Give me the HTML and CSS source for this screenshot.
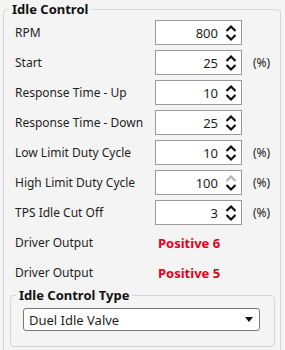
FILE: index.html
```html
<!DOCTYPE html>
<html lang="en">
<head>
    <meta charset="UTF-8">
    <title>Idle Control</title>
    <link rel="stylesheet" href="styles.css">
</head>
<body>
    <fieldset class="group">
        <legend>Idle Control</legend>

        <div class="rows">
            <div class="row">
                <span class="label">RPM</span>
                <div class="spin"><span class="value">800</span><svg class="arrows" width="12" height="18" viewBox="0 0 12 18"><path class="up" d="M1.5 7 L6 2.5 L10.5 7"/><path d="M1.5 11 L6 15.5 L10.5 11"/></svg></div>
            </div>
            <div class="row">
                <span class="label">Start</span>
                <div class="spin"><span class="value">25</span><svg class="arrows" width="12" height="18" viewBox="0 0 12 18"><path class="up" d="M1.5 7 L6 2.5 L10.5 7"/><path d="M1.5 11 L6 15.5 L10.5 11"/></svg></div>
                <span class="unit">(%)</span>
            </div>
            <div class="row">
                <span class="label">Response Time - Up</span>
                <div class="spin"><span class="value">10</span><svg class="arrows" width="12" height="18" viewBox="0 0 12 18"><path class="up" d="M1.5 7 L6 2.5 L10.5 7"/><path d="M1.5 11 L6 15.5 L10.5 11"/></svg></div>
            </div>
            <div class="row">
                <span class="label">Response Time - Down</span>
                <div class="spin"><span class="value">25</span><svg class="arrows" width="12" height="18" viewBox="0 0 12 18"><path class="up" d="M1.5 7 L6 2.5 L10.5 7"/><path d="M1.5 11 L6 15.5 L10.5 11"/></svg></div>
            </div>
            <div class="row">
                <span class="label">Low Limit Duty Cycle</span>
                <div class="spin"><span class="value">10</span><svg class="arrows" width="12" height="18" viewBox="0 0 12 18"><path class="up" d="M1.5 7 L6 2.5 L10.5 7"/><path d="M1.5 11 L6 15.5 L10.5 11"/></svg></div>
                <span class="unit">(%)</span>
            </div>
            <div class="row">
                <span class="label">High Limit Duty Cycle</span>
                <div class="spin"><span class="value">100</span><svg class="arrows max" width="12" height="18" viewBox="0 0 12 18"><path class="up" d="M1.5 7 L6 2.5 L10.5 7"/><path d="M1.5 11 L6 15.5 L10.5 11"/></svg></div>
                <span class="unit">(%)</span>
            </div>
            <div class="row">
                <span class="label">TPS Idle Cut Off</span>
                <div class="spin"><span class="value">3</span><svg class="arrows" width="12" height="18" viewBox="0 0 12 18"><path class="up" d="M1.5 7 L6 2.5 L10.5 7"/><path d="M1.5 11 L6 15.5 L10.5 11"/></svg></div>
                <span class="unit">(%)</span>
            </div>
            <div class="row">
                <span class="label">Driver Output</span>
                <span class="output">Positive 6</span>
            </div>
            <div class="row">
                <span class="label">Driver Output</span>
                <span class="output">Positive 5</span>
            </div>
        </div>

        <fieldset class="group inner">
            <legend>Idle Control Type</legend>
            <div class="combo">
                <span>Duel Idle Valve</span>
                <span class="caret"></span>
            </div>
        </fieldset>
    </fieldset>
</body>
</html>
```

FILE: styles.css
```css
* {
    margin: 0;
    padding: 0;
    box-sizing: border-box;
}

body {
    font-family: "Noto Sans", "Open Sans", sans-serif;
    font-size: 12px;
    color: #1e1e1e;
    background: #f4f4f4;
    height: 350px;
    overflow: hidden;
}

.group {
    margin: 1px 4px 0 3px;
    border: 1px solid #d6d6d6;
    border-radius: 4px;
    padding: 0;
    min-height: 360px;
}

.group legend {
    font-weight: 700;
    font-size: 13px;
    line-height: 16px;
    padding: 0 3px;
    margin-left: 5px;
    color: #111;
}

.rows {
    display: flex;
    flex-direction: column;
    gap: 5px;
    padding: 3px 0 0 11px;
}

.row {
    display: flex;
    align-items: center;
    height: 25px;
}

.label {
    width: 140px;
}

.spin {
    width: 87px;
    height: 25px;
    display: flex;
    align-items: center;
    justify-content: flex-end;
    background: #fff;
    border: 1px solid #9a9a9a;
    padding-right: 4px;
}

.value {
    margin-right: 7px;
    font-size: 13px;
}

.arrows path {
    fill: none;
    stroke: #111;
    stroke-width: 2.2;
}

.arrows.max .up {
    stroke: #b4b4b4;
}

.unit {
    margin-left: 11px;
}

.output {
    padding-left: 3px;
    color: #e2001a;
    font-weight: 700;
    font-size: 13px;
}

.group.inner {
    margin: 2px 5px 0 6px;
    min-height: 60px;
}

.combo {
    margin: 5px 14px 0 12px;
    height: 23px;
    display: flex;
    align-items: center;
    justify-content: space-between;
    background: #fff;
    border: 1px solid #7a7a7a;
    border-radius: 3px;
    padding: 0 6px 0 5px;
    font-size: 13px;
}

.caret {
    width: 0;
    height: 0;
    border-left: 4px solid transparent;
    border-right: 4px solid transparent;
    border-top: 5px solid #111;
}
```
